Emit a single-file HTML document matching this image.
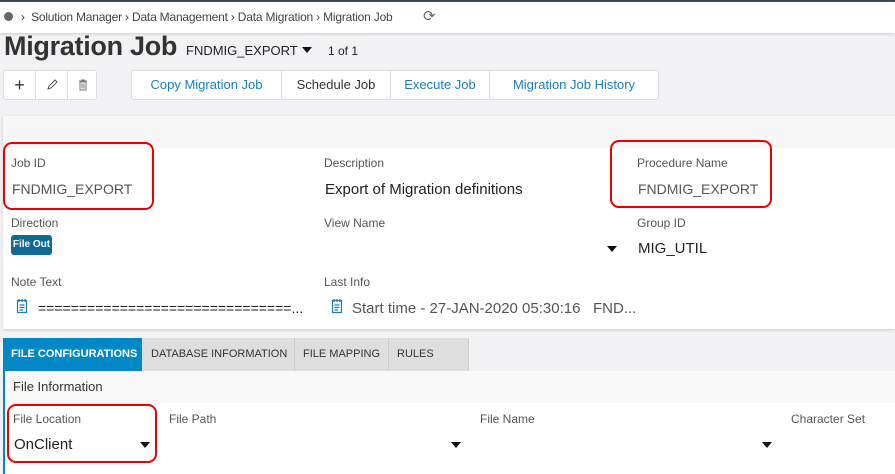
<!DOCTYPE html>
<html><head><style>
*{box-sizing:border-box;margin:0;padding:0}
body{width:895px;height:474px;overflow:hidden;background:#f2f2f4;font-family:"Liberation Sans",sans-serif;position:relative;color:#333}
.a{position:absolute;white-space:nowrap}
.lbl{font-size:12px;color:#555}
.val{font-size:15px;color:#222}
.red{position:absolute;border:2px solid #e00;border-radius:9px}
.tri{position:absolute;width:0;height:0;border-left:5px solid transparent;border-right:5px solid transparent;border-top:6px solid #111}
.btn{position:absolute;top:70px;height:30px;border:1px solid #ddd;background:#fff;border-radius:3px}
.bt{position:absolute;top:0;height:28px;line-height:28px;font-size:13px;text-align:center;border-right:1px solid #ddd}
</style></head><body>
<div class="a" style="left:0;top:0;width:895px;height:2px;background:#2c3e46"></div>
<div class="a" style="left:0;top:2px;width:895px;height:31px;background:#fff;box-shadow:0 1px 3px #ccc"></div>
<div class="a" style="left:4px;top:12px;width:9px;height:9px;border-radius:50%;background:#666"></div>
<div class="a" style="left:21px;top:10px;font-size:12px;color:#444;letter-spacing:-0.2px">›&nbsp; Solution Manager › Data Management › Data Migration › Migration Job</div>
<div class="a" style="left:423px;top:7px;font-size:15px;color:#666">⟳</div>
<div class="a" style="left:4px;top:31px;font-size:27px;font-weight:bold;color:#333;letter-spacing:-0.3px">Migration Job</div>
<div class="a" style="left:186px;top:43px;font-size:13px;color:#222">FNDMIG_EXPORT</div>
<div class="tri" style="left:302px;top:47px"></div>
<div class="a" style="left:328px;top:44px;font-size:12px;color:#222">1 of 1</div>
<div class="btn" style="left:3px;width:94px">
<div class="bt" style="left:0;width:32px;font-size:18px;color:#333">+</div>
<div class="bt" style="left:32px;width:32px;color:#555">
<svg width="12" height="12" viewBox="0 0 12 12" style="margin-top:8px"><path d="M2 10 L3 7 L9 1 L11 3 L5 9 Z" fill="none" stroke="#555" stroke-width="1"/></svg></div>
<div class="bt" style="left:64px;width:30px;border:none">
<svg width="10" height="12" viewBox="0 0 10 12" style="margin-top:8px"><path d="M1 2H9M3.5 2V1H6.5V2M2 3H8V11H2Z M4 4.5V9.5M6 4.5V9.5" fill="none" stroke="#777" stroke-width="1"/></svg></div>
</div>
<div class="btn" style="left:131px;width:528px">
<div class="bt" style="left:0;width:150px;color:#1a7fbf">Copy Migration Job</div>
<div class="bt" style="left:150px;width:109px;color:#333">Schedule Job</div>
<div class="bt" style="left:259px;width:99px;color:#1a7fbf">Execute Job</div>
<div class="bt" style="left:358px;width:168px;border:none;color:#1a7fbf">Migration Job History</div>
</div>
<div class="a" style="left:3px;top:116px;width:892px;height:213px;background:#fff;box-shadow:0 1px 3px #ccc"></div>
<div class="a" style="left:3px;top:116px;width:892px;height:32px;background:#f7f7f8"></div>
<div class="a lbl" style="left:11px;top:156px">Job ID</div>
<div class="a val" style="left:12px;top:181px;color:#555;font-size:14px">FNDMIG_EXPORT</div>
<div class="a lbl" style="left:324px;top:156px">Description</div>
<div class="a val" style="left:325px;top:181px">Export of Migration definitions</div>
<div class="a lbl" style="left:637px;top:156px">Procedure Name</div>
<div class="a val" style="left:638px;top:181px;color:#555;font-size:14px">FNDMIG_EXPORT</div>
<div class="a lbl" style="left:11px;top:216px">Direction</div>
<div class="a" style="left:11px;top:235px;width:41px;height:20px;background:#0f6a96;border-radius:3px;color:#fff;font-size:10px;font-weight:bold;line-height:20px;text-align:center">File Out</div>
<div class="a lbl" style="left:324px;top:216px">View Name</div>
<div class="tri" style="left:607px;top:246px"></div>
<div class="a lbl" style="left:637px;top:216px">Group ID</div>
<div class="a val" style="left:638px;top:240px">MIG_UTIL</div>
<div class="a lbl" style="left:11px;top:275px">Note Text</div>
<svg class="a" style="left:16px;top:298px" width="12" height="16" viewBox="0 0 12 16"><path d="M1.5 2.5H10.5V14.5H1.5Z M3 1V4 M6 1V4 M9 1V4 M3.5 7H8.5 M3.5 9.5H8.5 M3.5 12H7" fill="none" stroke="#1a7fbf" stroke-width="1.2"/></svg>
<div class="a val" style="left:38px;top:300px;font-size:14px">===============================...</div>
<div class="a lbl" style="left:324px;top:275px">Last Info</div>
<svg class="a" style="left:331px;top:298px" width="12" height="16" viewBox="0 0 12 16"><path d="M1.5 2.5H10.5V14.5H1.5Z M3 1V4 M6 1V4 M9 1V4 M3.5 7H8.5 M3.5 9.5H8.5 M3.5 12H7" fill="none" stroke="#1a7fbf" stroke-width="1.2"/></svg>
<div class="a val" style="left:352px;top:300px;color:#555">Start time - 27-JAN-2020 05:30:16&nbsp;&nbsp; FND...</div>
<div class="red" style="left:3px;top:142px;width:151px;height:68px"></div>
<div class="red" style="left:610px;top:140px;width:162px;height:68px"></div>
<div class="a" style="left:3px;top:338px;width:466px;height:33px;background:#dedede;border-right:1px solid #ccc"></div>
<div class="a" style="left:3px;top:338px;width:139px;height:33px;background:#0288c6;color:#fff;font-size:11px;font-weight:bold;line-height:33px;padding-left:8px">FILE CONFIGURATIONS</div>
<div class="a" style="left:142px;top:338px;width:153px;height:33px;border-right:1px solid #ccc;font-size:11px;line-height:33px;padding-left:9px;color:#333">DATABASE INFORMATION</div>
<div class="a" style="left:295px;top:338px;width:94px;height:33px;border-right:1px solid #ccc;font-size:11px;line-height:33px;padding-left:8px;color:#333">FILE MAPPING</div>
<div class="a" style="left:389px;top:338px;font-size:11px;line-height:33px;padding-left:8px;color:#333">RULES</div>
<div class="a" style="left:3px;top:371px;width:892px;height:103px;background:#fff"></div>
<div class="a" style="left:3px;top:371px;width:892px;height:32px;background:#f8f8f9"></div>
<div class="a" style="left:3px;top:371px;width:2px;height:103px;background:#0288c6"></div>
<div class="a" style="left:13px;top:379px;font-size:13px;color:#333">File Information</div>
<div class="a lbl" style="left:13px;top:412px">File Location</div>
<div class="a val" style="left:14px;top:436px">OnClient</div>
<div class="tri" style="left:140px;top:442px"></div>
<div class="a lbl" style="left:169px;top:412px">File Path</div>
<div class="tri" style="left:451px;top:442px"></div>
<div class="a lbl" style="left:480px;top:412px">File Name</div>
<div class="tri" style="left:762px;top:442px"></div>
<div class="a lbl" style="left:791px;top:412px">Character Set</div>
<div class="red" style="left:7px;top:404px;width:150px;height:59px"></div>
</body></html>
